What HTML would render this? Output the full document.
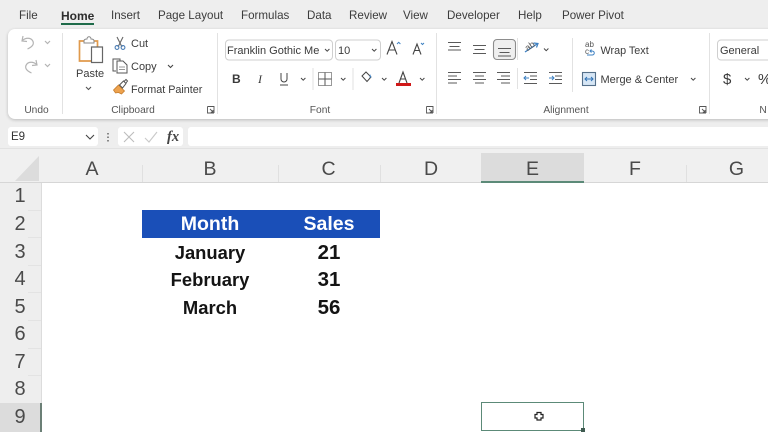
<!DOCTYPE html>
<html><head><meta charset="utf-8">
<style>
html,body{margin:0;padding:0}
body{width:768px;height:432px;overflow:hidden;background:#eeeeee;font-family:"Liberation Sans",sans-serif;position:relative;color:#3a3a3a}
.t{position:absolute;white-space:nowrap;line-height:1}
.b{position:absolute}
.c{transform:translateX(-50%)}
svg{position:absolute;left:0;top:0}
.h{font-size:19.5px;color:#4a4a4a;top:160px}
.r{font-size:20px;color:#4a4a4a;transform:translateX(-50%);left:20px}
.d{font-size:18.4px;font-weight:bold;color:#141414;transform:translateX(-50%)}
.n{font-size:20.5px}
.m{font-size:11.6px;top:10px;color:#3c3c3c}
.s{font-size:11px;color:#3c3c3c}
.g{font-size:10.2px;color:#555;top:105.500px;transform:translateX(-50%)}
</style></head><body>

<!-- menu -->
<div class="t m" style="left:19px">File</div>
<div class="t m" style="left:61px;font-weight:bold;color:#2d2d2d;font-size:12px">Home</div>
<div class="b" style="left:61px;top:23px;width:33px;height:2px;background:#1f6b4a"></div>
<div class="t m" style="left:111px">Insert</div>
<div class="t m" style="left:158px">Page Layout</div>
<div class="t m" style="left:241px">Formulas</div>
<div class="t m" style="left:307px">Data</div>
<div class="t m" style="left:349px">Review</div>
<div class="t m" style="left:403px">View</div>
<div class="t m" style="left:447px">Developer</div>
<div class="t m" style="left:518px">Help</div>
<div class="t m" style="left:562px">Power Pivot</div>

<!-- ribbon -->
<div class="b" style="left:8px;top:29px;width:780px;height:90px;background:#fff;border-radius:7px;box-shadow:0 1px 3px rgba(0,0,0,.22)"></div>

<svg width="768" height="432" viewBox="0 0 768 432" fill="none">
 <!-- separators -->
 <g stroke="#e2e2e2" stroke-width="1">
  <path d="M62.500 33V114M217.500 33V114M436.500 33V114M709.500 33V114"/>
  <path d="M313 68V90M353 68V90"/>
  <path d="M517.500 68V89M517.500 38V60M572.500 38V92"/>
 </g>
 <!-- undo / redo -->
 <g stroke="#b4b4b4" stroke-width="1.200">
  <path d="M23 36l-1 5 5 .5M22.500 40.500c3-3 8-3 10 0s.5 6-5 8.500"/>
  <path d="M36 60l1 5-5 .5M36.500 64.500c-3-3-8-3-10 0s-.5 6 5 8.500"/>
  <path d="M45 41l2.500 2.500L50 41M45 64l2.500 2.500L50 64"/>
 </g>
 <!-- paste -->
 <path d="M79.500 41H97.500V61H79.500Z" stroke="#e09a4c" stroke-width="1.700"/>
 <path d="M84 41c0-2 2-2 3-2 0-3 4-3 4 0 1 0 3 0 3 2v2H84Z" fill="#fff" stroke="#8a8a8a" stroke-width="1"/>
 <path d="M91.500 47H102.500V62.500H91.500Z" fill="#fff" stroke="#666" stroke-width="1.200"/>
 <path d="M86 87l2.500 2.500L91 87" stroke="#555" stroke-width="1.100"/>
 <!-- cut -->
 <path d="M117 37l5 10M123 37l-5 10" stroke="#666" stroke-width="1.100"/>
 <circle cx="117" cy="47.500" r="1.900" stroke="#4a7db5" stroke-width="1.100"/>
 <circle cx="123" cy="47.500" r="1.900" stroke="#4a7db5" stroke-width="1.100"/>
 <!-- copy -->
 <path d="M116 71H113V59H120V61" stroke="#555" stroke-width="1"/>
 <path d="M117 61H123L127 65V73H117Z" fill="#fff" stroke="#555" stroke-width="1"/>
 <path d="M119 67H125M119 69.500H125" stroke="#777" stroke-width=".8"/>
 <path d="M168 65l2.500 2.500L173 65" stroke="#444" stroke-width="1.100"/>
 <!-- painter -->
 <path d="M113.500 90l5-5 6 6-3 3-3-1.500-3 .5Z" fill="#eda24e" stroke="#c57d2e" stroke-width=".8"/>
 <path d="M119.500 85l4-4 2.500 2.500-3.500 4.500Z" fill="#fff" stroke="#555" stroke-width="1"/>
 <path d="M124 81.500l2-2 1.500 1.500-1.500 2" stroke="#555" stroke-width="1"/>
 <!-- dialog launchers -->
 <g stroke="#555" stroke-width=".9">
  <path d="M207.500 106.500H214V113M207.500 106.500V113H214M210 109l3 3M213 110v2.200h-2.200"/>
  <path d="M426.500 106.500H433V113M426.500 106.500V113H433M429 109l3 3M432 110v2.200h-2.200"/>
  <path d="M699.500 106.500H706V113M699.500 106.500V113H706M702 109l3 3M705 110v2.200h-2.200"/>
 </g>
 <!-- font boxes -->
 <rect x="225.500" y="40" width="107" height="20" rx="3.500" fill="#fff" stroke="#cfcfcf"/>
 <rect x="335.500" y="40" width="45" height="20" rx="3.500" fill="#fff" stroke="#cfcfcf"/>
 <path d="M325 49l2.200 2.200L329.400 49M372 49l2.200 2.200L376.400 49" stroke="#444" stroke-width="1"/>
 <path d="M387 54.500l5-13 5 13M389 50h6" stroke="#444" stroke-width="1.100"/>
 <path d="M397 44l1.700-1.700L400.400 44" stroke="#3d80c2" stroke-width="1"/>
 <path d="M413 54.500l4-10.500 4 10.500M414.500 50.500h5" stroke="#444" stroke-width="1.100"/>
 <path d="M421 43l1.500 1.500L424 43" stroke="#3d80c2" stroke-width="1"/>
 <!-- underline + chevrons -->
 <path d="M281 73v6a3 3 0 006 0v-6M280 85h8" stroke="#444" stroke-width="1"/>
 <path d="M301 78l2.200 2.200L305.400 78M341 78l2.200 2.200L345.400 78M382 78l2.200 2.200L386.400 78M420 78l2.200 2.200L424.400 78" stroke="#444" stroke-width="1"/>
 <!-- borders -->
 <rect x="318.500" y="72.500" width="13" height="13" stroke="#999"/>
 <path d="M325 72.500v13M318.500 79h13" stroke="#555"/>
 <!-- fill -->
 <path d="M362 76l4-4 5 5-4 4.500Z" stroke="#444" stroke-width="1"/>
 <path d="M370 74l1.500 3.500-2 0Z" fill="#3d80c2"/>
 <!-- font color -->
 <path d="M399 83l4-11 4 11M400.500 79h5" stroke="#444" stroke-width="1.100"/>
 <rect x="396" y="83" width="15" height="3" fill="#d01818"/>
 <!-- alignment -->
 <g stroke="#5a5a5a" stroke-width="1.100">
  <path d="M448 42.500h13M449.500 46.500h10M448 50h13"/>
  <path d="M473 45.500h13M474.500 49.500h10M473 53.500h13"/>
  <path d="M448 72.500h13M448 76h9M448 79.500h13M448 83h9"/>
  <path d="M473 72.500h13M475 76h9M473 79.500h13M475 83h9"/>
  <path d="M497 72.500h13M501 76h9M497 79.500h13M501 83h9"/>
 </g>
 <rect x="493.500" y="39.500" width="22" height="20" rx="3.500" fill="#efefef" stroke="#8d8d8d" stroke-width="1.100"/>
 <path d="M498 48.500h13M499.500 52.500h10M498 56h13" stroke="#5a5a5a" stroke-width="1.100"/>
 <!-- orientation -->
 <path d="M525 52l12-8" stroke="#3d80c2" stroke-width="1.300"/>
 <path d="M533.500 43l4.500 .5-1.500 4" stroke="#3d80c2" stroke-width="1.200"/>
 <path d="M544 48.500l2.200 2.200 2.200-2.200" stroke="#444" stroke-width="1"/>
 <!-- indent -->
 <path d="M524 72.500h13M530 76h7M530 79.500h7M524 83.500h13" stroke="#5a5a5a" stroke-width="1"/>
 <path d="M529 78h-5m2-2-2 2 2 2" stroke="#3d80c2" stroke-width="1"/>
 <path d="M549 72.500h13M555 76h7M555 79.500h7M549 83.500h13" stroke="#5a5a5a" stroke-width="1"/>
 <path d="M549 78h5m-2-2 2 2-2 2" stroke="#3d80c2" stroke-width="1"/>
 <!-- wrap -->
 <path d="M587 55h5c3 0 3-4 0-4h-2m1.500-1.500-1.500 1.500 1.500 1.500" stroke="#3d80c2" stroke-width="1"/>
 <!-- merge -->
 <rect x="582.500" y="72.500" width="13" height="13" fill="#d6e6f5" stroke="#55708a" stroke-width="1.100"/>
 <path d="M585 79h8m-6-2-2 2 2 2m4-4 2 2-2 2" stroke="#2f72b5" stroke-width="1"/>
 <path d="M691 78l2.200 2.200L695.400 78" stroke="#444" stroke-width="1"/>
 <rect x="717.500" y="40" width="70" height="20" rx="3.500" fill="#fff" stroke="#cfcfcf"/>
 <path d="M745 78l2.200 2.200 2.200-2.200" stroke="#444" stroke-width="1"/>
</svg>

<!-- ribbon text -->
<div class="t s" style="left:76px;top:69px;color:#3c3c3c">Paste</div>
<div class="t s" style="left:131px;top:38.500px">Cut</div>
<div class="t s" style="left:131px;top:61.500px">Copy</div>
<div class="t s" style="left:131px;top:85px;font-size:10.800px">Format Painter</div>
<div class="t g" style="left:36.500px">Undo</div>
<div class="t g" style="left:133px">Clipboard</div>
<div class="t g" style="left:320px">Font</div>
<div class="t g" style="left:566px">Alignment</div>
<div class="t g" style="left:763px">N</div>
<div class="t" style="left:227px;top:45.500px;font-size:11px;width:94px;overflow:hidden">Franklin Gothic Me</div>
<div class="t" style="left:338px;top:45.500px;font-size:11px">10</div>
<div class="t" style="left:232px;top:73px;font-size:12px;font-weight:bold">B</div>
<div class="t" style="left:258px;top:73px;font-size:12px;font-style:italic;font-family:'Liberation Serif',serif">I</div>
<div class="t s" style="left:600.500px;top:45.500px;font-size:10.800px">Wrap Text</div>
<div class="t s" style="left:600.500px;top:74.500px">Merge &amp; Center</div>
<div class="t" style="left:585px;top:41px;font-size:8px;color:#555;line-height:7px;white-space:normal;width:10px">ab<br>c</div>
<div class="t" style="left:525px;top:42px;font-size:9px;color:#555;transform:rotate(-35deg)">ab</div>
<div class="t" style="left:720px;top:45.500px;font-size:11px">General</div>
<div class="t" style="left:723px;top:72px;font-size:15px">$</div>
<div class="t" style="left:758px;top:72px;font-size:15px">%</div>

<!-- formula bar -->
<div class="b" style="left:8px;top:127px;width:90px;height:19px;background:#fff;border-radius:3px"></div>
<div class="b" style="left:118px;top:127px;width:65px;height:19px;background:#fff;border-radius:3px"></div>
<div class="b" style="left:188px;top:127px;width:580px;height:19px;background:#fff;border-radius:3px 0 0 3px"></div>
<div class="t" style="left:11px;top:132px;font-size:11.500px;color:#333">E9</div>
<svg width="768" height="432" viewBox="0 0 768 432" fill="none">
 <path d="M86 135l4 4 4-4" stroke="#444" stroke-width="1.100"/>
 <path d="M108 133v1.500M108 136.500v1.500M108 140v1.500" stroke="#666" stroke-width="1.500"/>
 <path d="M124 132l10 10M134 132l-10 10" stroke="#bdbdbd" stroke-width="1.100"/>
 <path d="M145 138l4 4 8-10" stroke="#c9c9c9" stroke-width="1.100"/>
</svg>
<div class="t" style="left:167px;top:130px;font-size:14.500px;font-style:italic;font-weight:bold;font-family:'Liberation Serif',serif;color:#444">fx</div>

<!-- grid -->
<div class="b" style="left:0;top:147.500px;width:768px;height:1px;background:#e2e2e2"></div>
<div class="b" style="left:0;top:148.500px;width:768px;height:34px;background:#f0f0f0"></div>
<div class="b" style="left:41px;top:183px;width:727px;height:249px;background:#fff"></div>
<div class="b" style="left:0;top:182px;width:768px;height:1px;background:#d6d6d6"></div>
<div class="b" style="left:41px;top:183px;width:1px;height:249px;background:#dcdcdc"></div>
<svg width="768" height="432" viewBox="0 0 768 432">
 <path d="M39 156V181H15Z" fill="#dcdcdc"/>
 <path d="M142.500 165V182M278.500 165V182M380.500 165V182M686.500 165V182" stroke="#e0e0e0"/>
 <path d="M28 210.500H41M28 237.500H41M28 265.500H41M28 292.500H41M28 320.500H41M28 348.500H41M28 375.500H41" stroke="#e3e3e3"/>
</svg>
<!-- selected col/row headers -->
<div class="b" style="left:481px;top:153px;width:103px;height:28px;background:#dcdcdc"></div>
<div class="b" style="left:481px;top:181px;width:103px;height:2px;background:#5c8a78"></div>
<div class="b" style="left:0;top:403px;width:40px;height:29px;background:#dcdcdc"></div>
<div class="b" style="left:40px;top:403px;width:2px;height:29px;background:#6b7f76"></div>

<div class="t h c" style="left:92px">A</div>
<div class="t h c" style="left:210px">B</div>
<div class="t h c" style="left:328.500px">C</div>
<div class="t h c" style="left:431px">D</div>
<div class="t h c" style="left:532.500px">E</div>
<div class="t h c" style="left:635px">F</div>
<div class="t h c" style="left:736.500px">G</div>

<div class="t r" style="top:186px">1</div>
<div class="t r" style="top:214px">2</div>
<div class="t r" style="top:241.500px">3</div>
<div class="t r" style="top:269px">4</div>
<div class="t r" style="top:297px">5</div>
<div class="t r" style="top:324px">6</div>
<div class="t r" style="top:352px">7</div>
<div class="t r" style="top:379px">8</div>
<div class="t r" style="top:407px">9</div>

<!-- table -->
<div class="b" style="left:142px;top:210px;width:238px;height:28px;background:#1a4fb8"></div>
<div class="t d" style="left:210px;top:215px;color:#fff;font-size:19.500px">Month</div>
<div class="t d" style="left:329px;top:215px;color:#fff;font-size:19.500px">Sales</div>
<div class="t d" style="left:210px;top:243.500px">January</div>
<div class="t d" style="left:210px;top:271px">February</div>
<div class="t d" style="left:210px;top:298.500px">March</div>
<div class="t d n" style="left:329px;top:242.500px">21</div>
<div class="t d n" style="left:329px;top:270px">31</div>
<div class="t d n" style="left:329px;top:297.500px">56</div>

<!-- selection -->
<div class="b" style="left:481px;top:402px;width:101px;height:27px;border:1.500px solid #5c8a78"></div>
<div class="b" style="left:581px;top:428px;width:4px;height:4px;background:#3f5a50"></div>
<svg width="768" height="432" viewBox="0 0 768 432" fill="none">
 <path d="M537 412.500h4v2h2v3.500h-2v2h-4v-2h-2v-3.500h2Z" fill="#fff" stroke="#222" stroke-width="1.200"/>
</svg>
</body></html>
